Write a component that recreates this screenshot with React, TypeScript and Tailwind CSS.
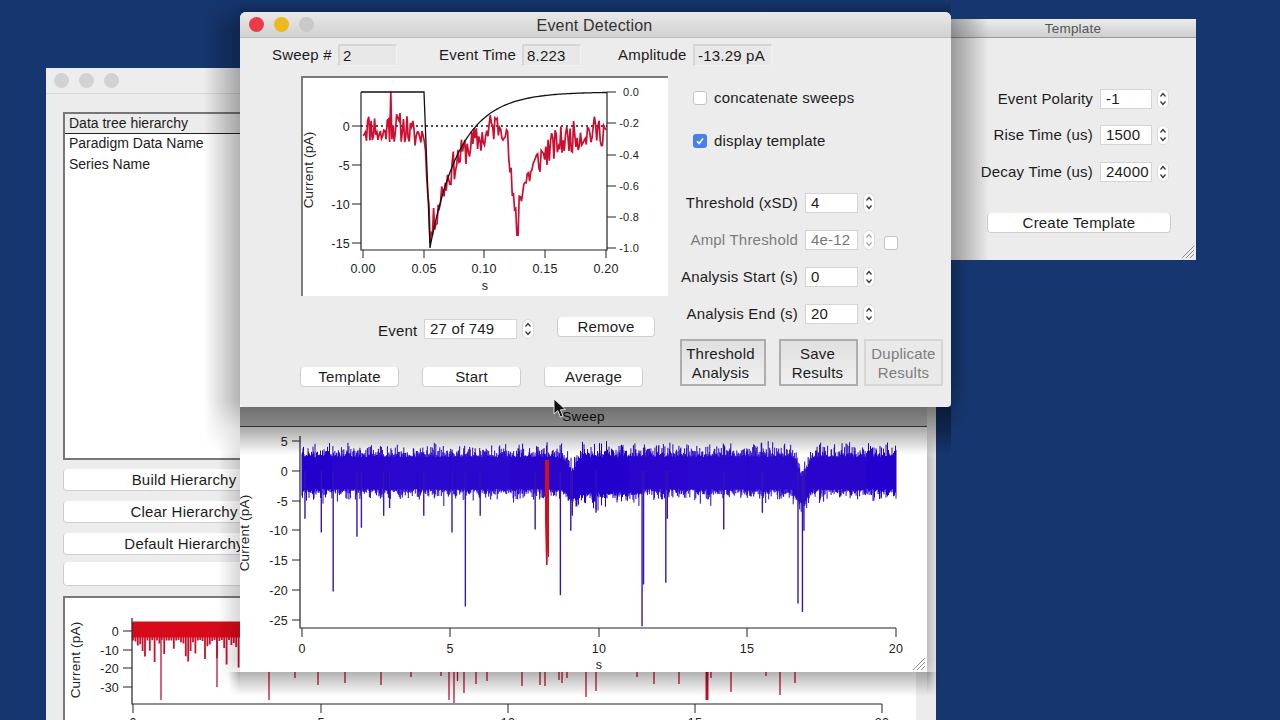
import type { ReactNode } from "react";

function makeRng(seed: number) {
  let s = seed;
  return () => {
    s = (s * 1664525 + 1013904223) % 4294967296;
    return s / 4294967296;
  };
}

function Lights({ active }: { active?: boolean }) {
  if (active) {
    return (
      <div className="flex items-center gap-[10px]">
        <span className="w-[15px] h-[15px] rounded-full bg-[#ec3a4b]" />
        <span className="w-[15px] h-[15px] rounded-full bg-[#eeb91e]" />
        <span className="w-[15px] h-[15px] rounded-full bg-[#c9c9c9]" />
      </div>
    );
  }
  return (
    <div className="flex items-center gap-[10px]">
      <span className="w-[15px] h-[15px] rounded-full bg-[#d2d2d2]" />
      <span className="w-[15px] h-[15px] rounded-full bg-[#d2d2d2]" />
      <span className="w-[15px] h-[15px] rounded-full bg-[#d2d2d2]" />
    </div>
  );
}

function Stepper({ dim }: { dim?: boolean }) {
  const stroke = dim ? "#a5a5a5" : "#333333";
  return (
    <div className="w-[12px] h-[20px] rounded-[6px] bg-white border border-[#dcdcdc] shrink-0">
      <svg className="-ml-[1px] -mt-[1px]" width="12" height="20" viewBox="0 0 12 20" fill="none" stroke={stroke} strokeWidth="1.2">
        <path d="M3.5 7.5 L6 4.5 L8.5 7.5" />
        <path d="M3.5 12.5 L6 15.5 L8.5 12.5" />
      </svg>
    </div>
  );
}

function Field({ value, dim, className }: { value: string; dim?: boolean; className: string }) {
  return (
    <div
      className={`h-[20px] bg-white border border-[#d4d4d4] pl-[5px] leading-[18px] shrink-0 ${
        dim ? "text-[#777777]" : "text-[#1c1c1c]"
      } ${className}`}
    >
      {value}
    </div>
  );
}

function ReadField({ value, className }: { value: string; className: string }) {
  return (
    <div
      className={`h-[22px] bg-[#e8e8e8] border-t-2 border-l-2 border-[#d6d6d6] border-r border-b border-r-[#f2f2f2] border-b-[#f2f2f2] pl-[3px] leading-[19px] ${className}`}
    >
      {value}
    </div>
  );
}

function PillButton({ children, className }: { children: ReactNode; className: string }) {
  return (
    <div
      className={`h-[20px] bg-white rounded-[4px] border-b border-x border-[#cfcfcf] text-center leading-[20px] text-[#1c1c1c] shrink-0 ${className}`}
    >
      {children}
    </div>
  );
}

function SquareButton({ lines, dim, className }: { lines: string[]; dim?: boolean; className: string }) {
  return (
    <div
      className={`h-[47px] border-2 flex flex-col items-center justify-center leading-[19px] shrink-0 ${
        dim
          ? "border-[#d6d6d6] bg-[#e9e9e9] text-[#7d7d7d]"
          : "border-[#adadad] bg-gradient-to-b from-[#e0e0e0] to-[#efefef] text-[#1c1c1c]"
      } ${className}`}
    >
      {lines.map((l) => (
        <span key={l}>{l}</span>
      ))}
    </div>
  );
}

function ThresholdRow({ label, value, dim, extra }: { label: string; value: string; dim?: boolean; extra?: ReactNode }) {
  return (
    <div className="flex items-center h-[20px] mt-[17px]">
      <div className={`w-[118px] text-right whitespace-nowrap ${dim ? "text-[#7d7d7d]" : ""}`}>{label}</div>
      <Field value={value} dim={dim} className="w-[53px] ml-[7px]" />
      <div className="ml-[5px]">
        <Stepper dim={dim} />
      </div>
      {extra}
    </div>
  );
}

function TemplateRow({ label, value, className }: { label: string; value: string; className: string }) {
  return (
    <div className={`flex items-center h-[20px] ${className}`}>
      <div className="w-[143px] text-right whitespace-nowrap">{label}</div>
      <Field value={value} className="w-[52px] ml-[7px]" />
      <div className="ml-[5px]">
        <Stepper />
      </div>
    </div>
  );
}

function ResizeGrip() {
  return (
    <svg className="absolute right-[1px] bottom-[1px]" width="14" height="14" viewBox="0 0 14 14" stroke="#8d8d8d" strokeWidth="1">
      <path d="M1 13 L13 1 M5 13 L13 5 M9 13 L13 9" />
    </svg>
  );
}

function EventPlot() {
  const rng = makeRng(11);
  const xOf = (t: number) => 363 + t * 1215;
  const yOf = (v: number) => 126 - v * 7.8;
  let pts = "";
  for (let i = 0; i <= 210; i++) {
    const t = (i / 210) * 0.2;
    let v = (rng() - 0.5) * 4 - 0.2;
    if (t < 0.05) {
      if (t > 0.012 && t < 0.018) v -= 1;
      if (t > 0.038) v -= 0.9;
      if (Math.abs(t - 0.023) < 0.0006) v = 4.4;
    } else if (t < 0.055) {
      v = -((t - 0.05) / 0.005) * 12 + v * 0.4;
    } else {
      v += -14.6 * Math.exp(-(t - 0.055) / 0.018);
      if (t > 0.118 && t < 0.125) v += -10 * ((t - 0.118) / 0.006);
      if (t >= 0.125) v += -10 * Math.exp(-(t - 0.125) / 0.022);
      if (Math.abs(t - 0.127) < 0.001) v = -14;
      if (t > 0.103 && t < 0.118) v += 0.9;
    }
    v = Math.max(v, -15.9);
    pts += `${xOf(t).toFixed(1)},${yOf(v).toFixed(1)} `;
  }
  let tpl = "M361 92 L424 92 L430 248";
  for (let x = 431; x <= 607; x += 2) {
    const t = (x - 363) / 1215;
    tpl += ` L${x} ${(92 + 156 * Math.exp(-(t - 0.055) / 0.025)).toFixed(1)}`;
  }
  return (
    <svg width="367" height="220" viewBox="301 76 367 220" className="block" fontFamily="'Liberation Sans', sans-serif">
      <rect x="301" y="76" width="367" height="220" fill="#ffffff" />
      <path d="M302 296 L302 77 L668 77" fill="none" stroke="#7a7a7a" strokeWidth="2" />
      <line x1="361" y1="126" x2="607" y2="126" stroke="#111" strokeWidth="1.4" strokeDasharray="2 3" />
      <polyline points={pts} fill="none" stroke="#cc0f30" strokeWidth="1.7" />
      <path d={tpl} fill="none" stroke="#111" strokeWidth="1.3" />
      <path d="M361 92 L361 250 L607 250 L607 92" fill="none" stroke="#222" strokeWidth="1.2" />
      <g stroke="#222" strokeWidth="1">
        {[126, 165, 204, 243].map((y) => (
          <line key={y} x1="352" x2="361" y1={y} y2={y} />
        ))}
        {[92, 123, 155, 186, 217, 248].map((y) => (
          <line key={y} x1="607" x2="616" y1={y} y2={y} />
        ))}
        {[363, 424, 484, 545, 606].map((x) => (
          <line key={x} x1={x} x2={x} y1="250" y2="258" />
        ))}
      </g>
      <g fontSize="12.5" fill="#222" textAnchor="end">
        {[
          ["0", 126],
          ["-5", 165],
          ["-10", 204],
          ["-15", 243],
        ].map(([l, y]) => (
          <text key={l} x="350" y={Number(y) + 4.5}>
            {l}
          </text>
        ))}
      </g>
      <g fontSize="11" fill="#222" textAnchor="end">
        {[
          ["0.0", 92],
          ["-0.2", 123],
          ["-0.4", 155],
          ["-0.6", 186],
          ["-0.8", 217],
          ["-1.0", 248],
        ].map(([l, y]) => (
          <text key={l} x="639" y={Number(y) + 4}>
            {l}
          </text>
        ))}
      </g>
      <g fontSize="12.5" fill="#222" textAnchor="middle">
        {[
          ["0.00", 363],
          ["0.05", 424],
          ["0.10", 484],
          ["0.15", 545],
          ["0.20", 606],
        ].map(([l, x]) => (
          <text key={l} x={x} y="273">
            {l}
          </text>
        ))}
        <text x="485" y="290">
          s
        </text>
      </g>
      <text transform="translate(313 170) rotate(-90)" fontSize="13.5" fill="#222" textAnchor="middle">
        Current (pA)
      </text>
    </svg>
  );
}

function SweepPlot() {
  const rng = makeRng(7);
  const xOf = (t: number) => 302 + t * 29.7;
  const yOf = (v: number) => 471 - v * 5.97;
  const spikes: [number, number][] = [
    [0.1, -8], [0.65, -10.3], [1.05, -20.2], [1.85, -11], [2.0, -9.5], [2.75, -7.5], [2.95, -6.2],
    [4.1, -7.5], [5.05, -10.3], [5.5, -22.7], [6.0, -7.5], [7.85, -9.8], [8.7, -20.8], [9.05, -10],
    [9.1, -7.5], [9.9, -7], [11.45, -26], [11.5, -19], [12.25, -18.7], [12.3, -8], [14.2, -9.8],
    [15.5, -7], [16.7, -22.2], [16.85, -23.6], [16.9, -10],
  ];
  let band = "";
  for (let i = 0; i <= 1190; i++) {
    const t = (i / 1190) * 20;
    let top = 2.3 + rng() * rng() * 2.9;
    let bottom = -3 - rng() * rng() * 2;
    if (rng() > 0.97) bottom -= 1.5;
    const dip = Math.exp(-Math.pow((t - 9.1) / 0.22, 2)) * 2 + Math.exp(-Math.pow((t - 16.85) / 0.2, 2)) * 3;
    top -= dip * 1.2;
    bottom -= dip * 0.8;
    if (t > 9.2 && t < 11.4) bottom -= 0.6;
    band += `M${xOf(t).toFixed(1)} ${yOf(top).toFixed(1)}V${yOf(bottom).toFixed(1)}`;
  }
  const ticksY: [string, number][] = [
    ["5", 441], ["0", 471], ["-5", 501], ["-10", 530], ["-15", 560], ["-20", 590], ["-25", 620],
  ];
  const ticksX: [string, number][] = [
    ["0", 302], ["5", 450], ["10", 599], ["15", 747], ["20", 896],
  ];
  return (
    <svg width="687" height="245" viewBox="240 427 687 245" className="block" fontFamily="'Liberation Sans', sans-serif">
      <path d={band} stroke="#2500cc" strokeWidth="1" fill="none" />
      {spikes.map(([t, v]) => (
        <line key={t} x1={xOf(t)} x2={xOf(t)} y1={yOf(0)} y2={yOf(v)} stroke="#3414b4" strokeWidth="1.4" />
      ))}
      <path d="M545 460 L549 460 L549 520 L547.5 565 L546 565 L545 520 Z" fill="#d0101c" />
      <line x1="548.5" x2="548.5" y1="520" y2="557" stroke="#d0101c" strokeWidth="1" />
      <path d="M300 436 L300 628 L896 628" fill="none" stroke="#222" strokeWidth="1.2" />
      <g stroke="#222" strokeWidth="1">
        {ticksY.map(([l, y]) => (
          <line key={l} x1="292" x2="300" y1={y} y2={y} />
        ))}
        {ticksX.map(([l, x]) => (
          <line key={l} x1={x} x2={x} y1="628" y2="637" />
        ))}
      </g>
      <g fontSize="12.5" fill="#222" textAnchor="end">
        {ticksY.map(([l, y]) => (
          <text key={l} x="288" y={y + 4.5}>
            {l}
          </text>
        ))}
      </g>
      <g fontSize="12.5" fill="#222" textAnchor="middle">
        {ticksX.map(([l, x]) => (
          <text key={l} x={x} y="653">
            {l}
          </text>
        ))}
        <text x="599" y="669">
          s
        </text>
      </g>
      <text transform="translate(249 533) rotate(-90)" fontSize="13.5" fill="#222" textAnchor="middle">
        Current (pA)
      </text>
    </svg>
  );
}

function OverviewPlot() {
  const rng = makeRng(23);
  const visible: [number, number, number?][] = [
    [161, 700], [217, 687], [269, 700], [295, 678], [318, 685], [345, 683], [381, 685], [411, 677], [441, 676],
    [449, 700], [454, 703], [457.5, 681], [464, 693], [476, 684], [487, 681], [522, 686], [540, 685], [545, 686],
    [559, 680], [562, 683], [567, 678], [586, 697], [596, 691], [637, 677], [654, 684], [679, 684], [707, 700, 3],
    [711, 678], [731, 692], [766, 676], [780, 695], [795, 683],
  ];
  let band = "";
  for (let x = 133; x <= 240; x += 2.4) {
    const r = rng();
    const down = 640 + r * r * r * 30;
    band += `M${x.toFixed(1)} 622V${down.toFixed(1)}`;
  }
  const ticksY: [string, number][] = [
    ["0", 631], ["-10", 650], ["-20", 668], ["-30", 687],
  ];
  return (
    <svg width="853" height="126" viewBox="63 596 853 126" className="block" fontFamily="'Liberation Sans', sans-serif">
      <rect x="63" y="596" width="853" height="126" fill="#ffffff" />
      <path d="M64 722 L64 597 L916 597" fill="none" stroke="#7a7a7a" strokeWidth="2" />
      <path d={band} stroke="#c8102c" strokeWidth="1.8" fill="none" />
      <rect x="133" y="621.5" width="107" height="16" fill="#d60a18" />
      {visible.map(([x, y, w]) => (
        <line key={x} x1={x} x2={x} y1="630" y2={y} stroke="#c01030" strokeWidth={w ?? 1.3} />
      ))}
      <path d="M132 618 L132 704 L882 704" fill="none" stroke="#222" strokeWidth="1.2" />
      <g stroke="#222" strokeWidth="1">
        {ticksY.map(([l, y]) => (
          <line key={l} x1="123" x2="132" y1={y} y2={y} />
        ))}
        {[133, 321, 508, 695, 882].map((x) => (
          <line key={x} x1={x} x2={x} y1="704" y2="713" />
        ))}
      </g>
      <g fontSize="12.5" fill="#222" textAnchor="end">
        {ticksY.map(([l, y]) => (
          <text key={l} x="119" y={y + 4.5}>
            {l}
          </text>
        ))}
      </g>
      <g fontSize="12.5" fill="#222" textAnchor="middle">
        <text x="133" y="727">0</text>
        <text x="321" y="727">5</text>
        <text x="508" y="727">10</text>
        <text x="695" y="727">15</text>
        <text x="882" y="727">20</text>
      </g>
      <text transform="translate(80 660) rotate(-90)" fontSize="13.5" fill="#222" textAnchor="middle">
        Current (pA)
      </text>
    </svg>
  );
}

export default function App() {
  return (
    <div className="relative w-[1280px] h-[720px] overflow-hidden bg-[#16366f] font-['Liberation_Sans',Arial,sans-serif] text-[15px] tracking-[0.2px] text-[#1c1c1c]">
      {/* data tree window, mostly covered */}
      <div className="absolute left-[46px] top-[68px] w-[890px] h-[680px] rounded-t-[6px] bg-[#ececec]">
        <div className="h-[26px] bg-[#ededed] border-b border-[#d8d8d8] pl-[8px] flex items-center">
          <Lights />
        </div>
        <div className="ml-[17px] mt-[18px] w-[242px] h-[348px] bg-white border-2 border-[#777777] border-r-0 text-[14px] tracking-normal">
          <div className="h-[20px] bg-[#ececec] border-b border-[#222222] pl-[4px] leading-[19px]">Data tree hierarchy</div>
          <div className="pl-[4px] -mt-[1px] leading-[21px]">Paradigm Data Name</div>
          <div className="pl-[4px] leading-[21px]">Series Name</div>
        </div>
        <div className="ml-[17px] mt-[9px] w-[242px] flex flex-col gap-[10px]">
          <PillButton className="h-[22px] leading-[22px] w-full">Build Hierarchy</PillButton>
          <PillButton className="h-[22px] leading-[22px] w-full">Clear Hierarchy</PillButton>
          <PillButton className="h-[22px] leading-[22px] w-full">Default Hierarchy</PillButton>
        </div>
        <PillButton className="ml-[17px] mt-[7px] w-[242px] h-[24px]">{""}</PillButton>
        <div className="ml-[17px] mt-[10px]">
          <OverviewPlot />
        </div>
      </div>

      {/* template window */}
      <div className="absolute left-[950px] top-[19px] w-[246px] h-[241px] bg-[#ececec]">
        <div className="h-[19px] bg-gradient-to-b from-[#ececec] to-[#cfcfcf] border-b border-[#999999] text-center text-[13.5px] leading-[19px] text-[#555555]">
          Template
        </div>
        <TemplateRow label="Event Polarity" value="-1" className="mt-[51px]" />
        <TemplateRow label="Rise Time (us)" value="1500" className="mt-[16px]" />
        <TemplateRow label="Decay Time (us)" value="24000" className="mt-[17px]" />
        <PillButton className="ml-[37px] mt-[31px] w-[184px]">Create Template</PillButton>
        <ResizeGrip />
      </div>

      {/* shadows of the sweep window, falling on the window behind it */}
      <div className="absolute left-[228px] top-[672px] w-[711px] h-[24px] bg-gradient-to-b from-black/30 to-transparent [mask-image:linear-gradient(to_right,transparent,black_12px,black_699px,transparent)]" />
      <div className="absolute left-[218px] top-[430px] w-[22px] h-[256px] bg-gradient-to-r from-transparent to-black/15 [mask-image:linear-gradient(to_bottom,transparent,black_30px,black_230px,transparent)]" />
      <div className="absolute left-[927px] top-[430px] w-[9px] h-[266px] bg-gradient-to-r from-black/20 to-black/5 [mask-image:linear-gradient(to_bottom,transparent,black_30px,black_230px,transparent)]" />

      {/* sweep window */}
      <div className="absolute left-[240px] top-[407px] w-[687px] h-[265px] bg-white">
        <div className="h-[20px] bg-gradient-to-b from-[#dcdcdc] to-[#cfcfcf] border-b border-[#444444] text-center text-[13.5px] leading-[20px] text-[#111111]">
          Sweep
        </div>
        <SweepPlot />
        <ResizeGrip />
      </div>

      {/* shadows of the event detection window */}
      <div className="absolute left-[240px] top-[407px] w-[711px] h-[48px] bg-gradient-to-b from-black/50 via-black/30 to-transparent" />
      <div className="absolute left-[204px] top-0 w-[36px] h-[452px] bg-gradient-to-r from-transparent to-black/30 [mask-image:linear-gradient(to_bottom,transparent,black_30px,black_400px,transparent)]" />
      <div className="absolute left-[951px] top-[19px] w-[38px] h-[241px] bg-gradient-to-r from-black/35 to-transparent" />
      <div className="absolute left-[951px] top-[260px] w-[16px] h-[170px] bg-gradient-to-r from-black/25 to-transparent [mask-image:linear-gradient(to_bottom,black,black_120px,transparent)]" />
      <div className="absolute left-[240px] top-0 w-[711px] h-[12px] bg-gradient-to-b from-transparent to-black/25" />

      {/* event detection window */}
      <div className="absolute left-[240px] top-[12px] w-[711px] h-[395px] rounded-t-[6px] rounded-b-[4px] bg-[#ececec]">
        <div className="relative h-[26px] rounded-t-[6px] bg-gradient-to-b from-[#e9e9e9] to-[#d1d1d1] border-b border-[#bbbbbb] pl-[9px] flex items-center">
          <Lights active />
          <div className="absolute inset-x-0 top-0 text-center text-[16px] leading-[27px] text-[#333333] -ml-[2px]">Event Detection</div>
        </div>

        <div className="flex items-center mt-[6px] h-[22px]">
          <span className="ml-[32px] w-[60px] whitespace-nowrap">Sweep #</span>
          <ReadField value="2" className="ml-[6px] w-[59px]" />
          <span className="ml-[42px] w-[77px] whitespace-nowrap">Event Time</span>
          <ReadField value="8.223" className="ml-[6px] w-[59px]" />
          <span className="ml-[37px] w-[70px] whitespace-nowrap">Amplitude</span>
          <ReadField value="-13.29 pA" className="ml-[5px] w-[79px]" />
        </div>

        <div className="flex mt-[10px]">
          <div className="w-[440px]">
            <div className="ml-[61px]">
              <EventPlot />
            </div>
            <div className="flex items-start mt-[21px]">
              <span className="ml-[138px] w-[38px] mt-[3px] whitespace-nowrap">Event</span>
              <Field value="27 of 749" className="ml-[8px] mt-[2px] w-[93px]" />
              <div className="ml-[5px] mt-[2px]">
                <Stepper />
              </div>
              <PillButton className="ml-[23px] w-[98px]">Remove</PillButton>
            </div>
            <div className="flex gap-[23px] ml-[60px] mt-[24px]">
              <PillButton className="w-[99px]">Template</PillButton>
              <PillButton className="w-[99px]">Start</PillButton>
              <PillButton className="w-[99px]">Average</PillButton>
            </div>
          </div>

          <div className="w-[271px]">
            <div className="flex items-center ml-[13px] mt-[15px] h-[14px]">
              <span className="w-[14px] h-[14px] rounded-[3px] bg-white border border-[#c4c4c4]" />
              <span className="ml-[7px] whitespace-nowrap">concatenate sweeps</span>
            </div>
            <div className="flex items-center ml-[13px] mt-[29px] h-[14px]">
              <span className="w-[14px] h-[14px] rounded-[3px] bg-[#4a7fe6] flex items-center justify-center">
                <svg width="10" height="10" viewBox="0 0 10 10" fill="none" stroke="#ffffff" strokeWidth="1.6">
                  <path d="M2 5.2 L4.2 7.5 L8 2.5" />
                </svg>
              </span>
              <span className="ml-[7px] whitespace-nowrap">display template</span>
            </div>
            <div className="h-[28px]" />
            <ThresholdRow label="Threshold (xSD)" value="4" />
            <ThresholdRow
              label="Ampl Threshold"
              value="4e-12"
              dim
              extra={<span className="ml-[9px] mt-[5px] w-[14px] h-[14px] rounded-[3px] bg-white border border-[#c4c4c4]" />}
            />
            <ThresholdRow label="Analysis Start (s)" value="0" />
            <ThresholdRow label="Analysis End (s)" value="20" />
            <div className="flex mt-[15px]">
              <SquareButton lines={["Threshold", "Analysis"]} className="w-[86px] pr-[5px]" />
              <SquareButton lines={["Save", "Results"]} className="w-[79px] ml-[13px] pr-[2px]" />
              <SquareButton lines={["Duplicate", "Results"]} dim className="w-[79px] ml-[6px]" />
            </div>
          </div>
        </div>
      </div>

      {/* mouse pointer */}
      <svg className="absolute left-[553px] top-[398px]" width="14" height="21" viewBox="0 0 14 21">
        <path d="M1 1 L1 16 L4.8 12.6 L7.4 19 L10 18 L7.4 11.8 L12.4 11.6 Z" fill="#111111" stroke="#ffffff" strokeWidth="0.8" />
      </svg>
    </div>
  );
}
